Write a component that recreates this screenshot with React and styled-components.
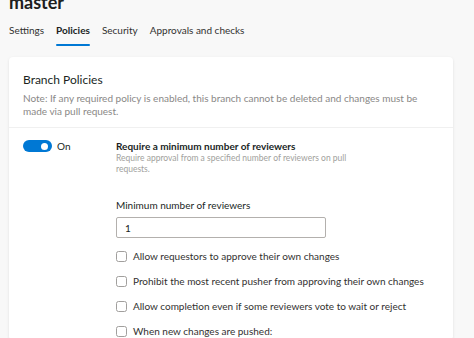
import React, { useState } from 'react';
import styled, { createGlobalStyle } from 'styled-components';

const GlobalStyle = createGlobalStyle`
  body {
    margin: 0;
    background: #f8f8f8;
    font-family: Lato, "Noto Sans", sans-serif;
    color: #201f1e;
  }
`;

const Page = styled.div`
  height: 338px;
  overflow: hidden;
  padding: 0 9px;
`;

const Title = styled.h1`
  margin: -8px 0 0;
  font-size: 18px;
  font-weight: 700;
  line-height: 20px;
  color: #201f1e;
`;

const Tabs = styled.nav`
  display: flex;
  gap: 12px;
  margin-top: 11px;
`;

const Tab = styled.div`
  position: relative;
  font-size: 10px;
  line-height: 14px;
  padding-bottom: 9px;
  font-weight: ${({ $active }) => ($active ? 700 : 400)};
  color: ${({ $active }) => ($active ? '#201f1e' : '#323130')};

  &::after {
    content: '';
    display: ${({ $active }) => ($active ? 'block' : 'none')};
    position: absolute;
    left: 0;
    right: 0;
    bottom: 0;
    height: 2px;
    border-radius: 1px;
    background: #0078d4;
  }
`;

const Card = styled.section`
  margin-top: 11px;
  width: 444px;
  background: #fff;
  border-radius: 4px;
  box-shadow: 0 1px 3px rgba(0, 0, 0, 0.1);
`;

const CardHeader = styled.div`
  padding: 15px 14px 10px;
  border-bottom: 1px solid #f0f0f0;
`;

const CardTitle = styled.h2`
  margin: 0;
  font-size: 12px;
  font-weight: 400;
  line-height: 16px;
`;

const Note = styled.p`
  margin: 4px 0 0;
  font-size: 10px;
  line-height: 12.5px;
  color: #8a8886;
`;

const PolicyRow = styled.div`
  display: grid;
  grid-template-columns: 93px 1fr;
  padding: 11px 14px 0;
`;

const ToggleWrap = styled.label`
  display: flex;
  align-items: center;
  gap: 5px;
  height: 14px;
  font-size: 10px;
`;

const Toggle = styled.button`
  width: 29px;
  height: 12px;
  border-radius: 6px;
  border: none;
  padding: 0;
  background: ${({ $on }) => ($on ? '#0078d4' : '#c8c6c4')};
  position: relative;
  cursor: pointer;

  &::after {
    content: '';
    position: absolute;
    top: 2.5px;
    left: ${({ $on }) => ($on ? '18px' : '3px')};
    width: 7px;
    height: 7px;
    border-radius: 50%;
    background: #fff;
  }
`;

const PolicyBody = styled.div`
  display: flex;
  flex-direction: column;
`;

const PolicyTitle = styled.div`
  font-size: 10px;
  font-weight: 700;
  line-height: 14px;
`;

const PolicyDesc = styled.div`
  font-size: 8.5px;
  line-height: 11px;
  color: #a19f9d;
  max-width: 240px;
`;

const FieldLabel = styled.div`
  margin-top: 23px;
  font-size: 10px;
  line-height: 14px;
`;

const NumberInput = styled.input`
  margin-top: 5px;
  width: 210px;
  height: 21px;
  box-sizing: border-box;
  border: 1px solid #b3b0ad;
  border-radius: 2px;
  padding: 0 8px;
  font-family: inherit;
  font-size: 10px;
  color: #201f1e;
  outline: none;
`;

const Options = styled.div`
  display: flex;
  flex-direction: column;
  gap: 8px;
  margin-top: 9.5px;
`;

const Option = styled.label`
  display: flex;
  align-items: center;
  gap: 6px;
  height: 17px;
  font-size: 10px;
  color: #323130;
  white-space: nowrap;
`;

const Box = styled.span`
  width: 11px;
  height: 11px;
  box-sizing: border-box;
  border: 1px solid #a19f9d;
  border-radius: 2.5px;
  flex: none;
`;

const options = [
  'Allow requestors to approve their own changes',
  'Prohibit the most recent pusher from approving their own changes',
  'Allow completion even if some reviewers vote to wait or reject',
  'When new changes are pushed:',
];

export default function App() {
  const [on, setOn] = useState(true);
  const [count, setCount] = useState('1');

  return (
    <>
      <GlobalStyle />
      <Page>
        <Title>master</Title>
        <Tabs>
          <Tab>Settings</Tab>
          <Tab $active>Policies</Tab>
          <Tab>Security</Tab>
          <Tab>Approvals and checks</Tab>
        </Tabs>
        <Card>
          <CardHeader>
            <CardTitle>Branch Policies</CardTitle>
            <Note>
              Note: If any required policy is enabled, this branch cannot be deleted and changes must be
              made via pull request.
            </Note>
          </CardHeader>
          <PolicyRow>
            <ToggleWrap>
              <Toggle $on={on} onClick={() => setOn(!on)} aria-label="Toggle policy" />
              {on ? 'On' : 'Off'}
            </ToggleWrap>
            <PolicyBody>
              <PolicyTitle>Require a minimum number of reviewers</PolicyTitle>
              <PolicyDesc>
                Require approval from a specified number of reviewers on pull requests.
              </PolicyDesc>
              <FieldLabel>Minimum number of reviewers</FieldLabel>
              <NumberInput value={count} onChange={e => setCount(e.target.value)} />
              <Options>
                {options.map(text => (
                  <Option key={text}>
                    <Box />
                    {text}
                  </Option>
                ))}
              </Options>
            </PolicyBody>
          </PolicyRow>
        </Card>
      </Page>
    </>
  );
}
